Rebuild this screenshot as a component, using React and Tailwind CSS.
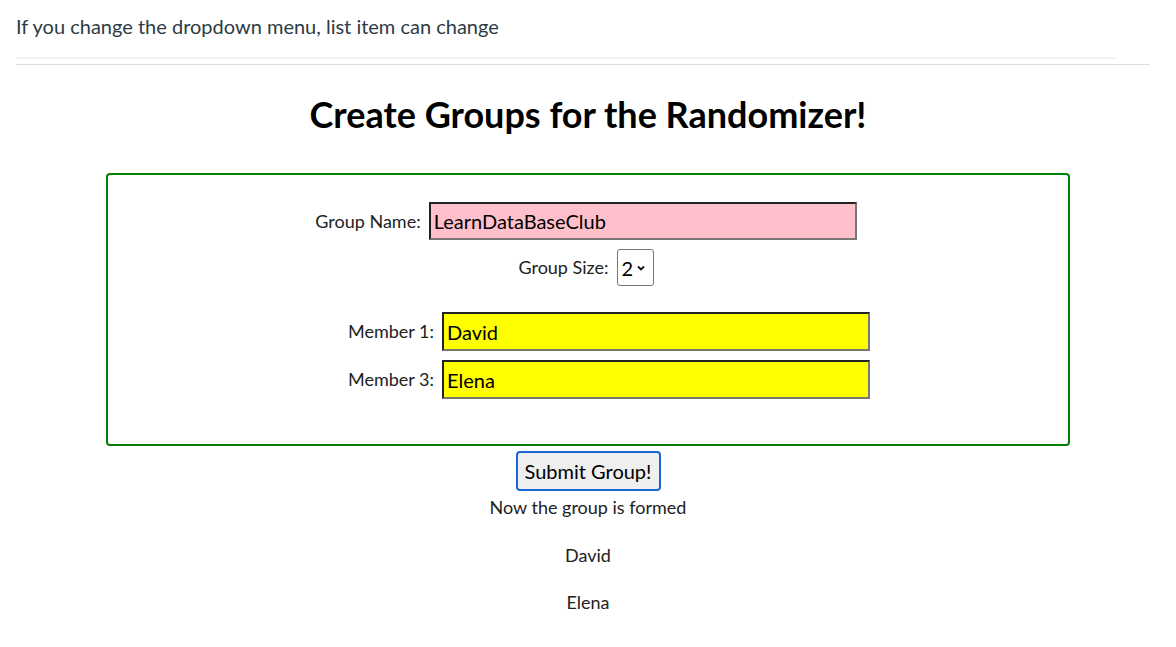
import React from "react";

const Member = ({ label, value }) => (
  <div className="flex items-center justify-center gap-2 pl-[42px]">
    <label className="text-[18px] text-[#222]">{label}</label>
    <input
      readOnly
      value={value}
      className="w-[428px] h-[39px] px-[3px] text-[20px] text-black bg-[#ffff00] border-2 border-t-[#222] border-l-[#222] border-b-[#777] border-r-[#777] outline-none"
    />
  </div>
);

const App = () => {
  return (
    <div className="min-h-[647px] bg-white font-['Lato',sans-serif] text-[#222]">
      <div className="px-4">
        <p className="pt-[13px] text-[20px] leading-[26px] text-[#2d3b45]">
          If you change the dropdown menu, list item can change
        </p>
        <div className="mt-[18px] h-[2px] w-[1099px] bg-[#f1f3f1]" />
        <div className="mt-[5px] h-px w-[1134px] bg-[#dcdcdc]" />
      </div>

      <h1 className="mt-[29px] text-center text-[36px] leading-[40px] font-bold text-black">
        Create Groups for the Randomizer!
      </h1>

      <div className="mx-auto mt-[39px] w-[964px] border-2 border-[#008000] rounded-[4px] pt-[27px] pb-[45px]">
        {/* group name */}
        <div className="flex items-center justify-center gap-2 pr-[4px]">
          <label className="text-[18px]">Group Name:</label>
          <input
            readOnly
            value="LearnDataBaseClub"
            className="w-[428px] h-[38px] px-[3px] text-[20px] text-black bg-[#ffc0cb] border-2 border-t-[#222] border-l-[#222] border-b-[#777] border-r-[#777] outline-none"
          />
        </div>

        {/* group size */}
        <div className="mt-[9px] flex items-center justify-center gap-2 pr-[4px]">
          <label className="text-[18px]">Group Size:</label>
          <div className="flex items-center gap-[3px] h-[37px] w-[37px] pl-[4px] border border-[#767676] rounded-[3px] bg-white">
            <span className="text-[20px] text-black">2</span>
            <svg width="10" height="10" viewBox="0 0 10 10" className="mt-[1px]">
              <path d="M2 3.5 L5 6.5 L8 3.5" fill="none" stroke="#111" strokeWidth="1.8" />
            </svg>
          </div>
        </div>

        {/* members */}
        <div className="mt-[26px]">
          <Member label="Member 1:" value="David" />
        </div>
        <div className="mt-[9px]">
          <Member label="Member 3:" value="Elena" />
        </div>
      </div>

      <div className="mt-[5px] flex justify-center">
        <button className="h-[40px] w-[145px] bg-[#efefef] border-2 border-[#1a66d4] rounded-[4px] text-[20px] text-black">
          Submit Group!
        </button>
      </div>

      <div className="text-center text-[18px] leading-[26px]">
        <p className="mt-[3px]">Now the group is formed</p>
        <p className="mt-[22px]">David</p>
        <p className="mt-[21px]">Elena</p>
      </div>
    </div>
  );
};

export default App;
